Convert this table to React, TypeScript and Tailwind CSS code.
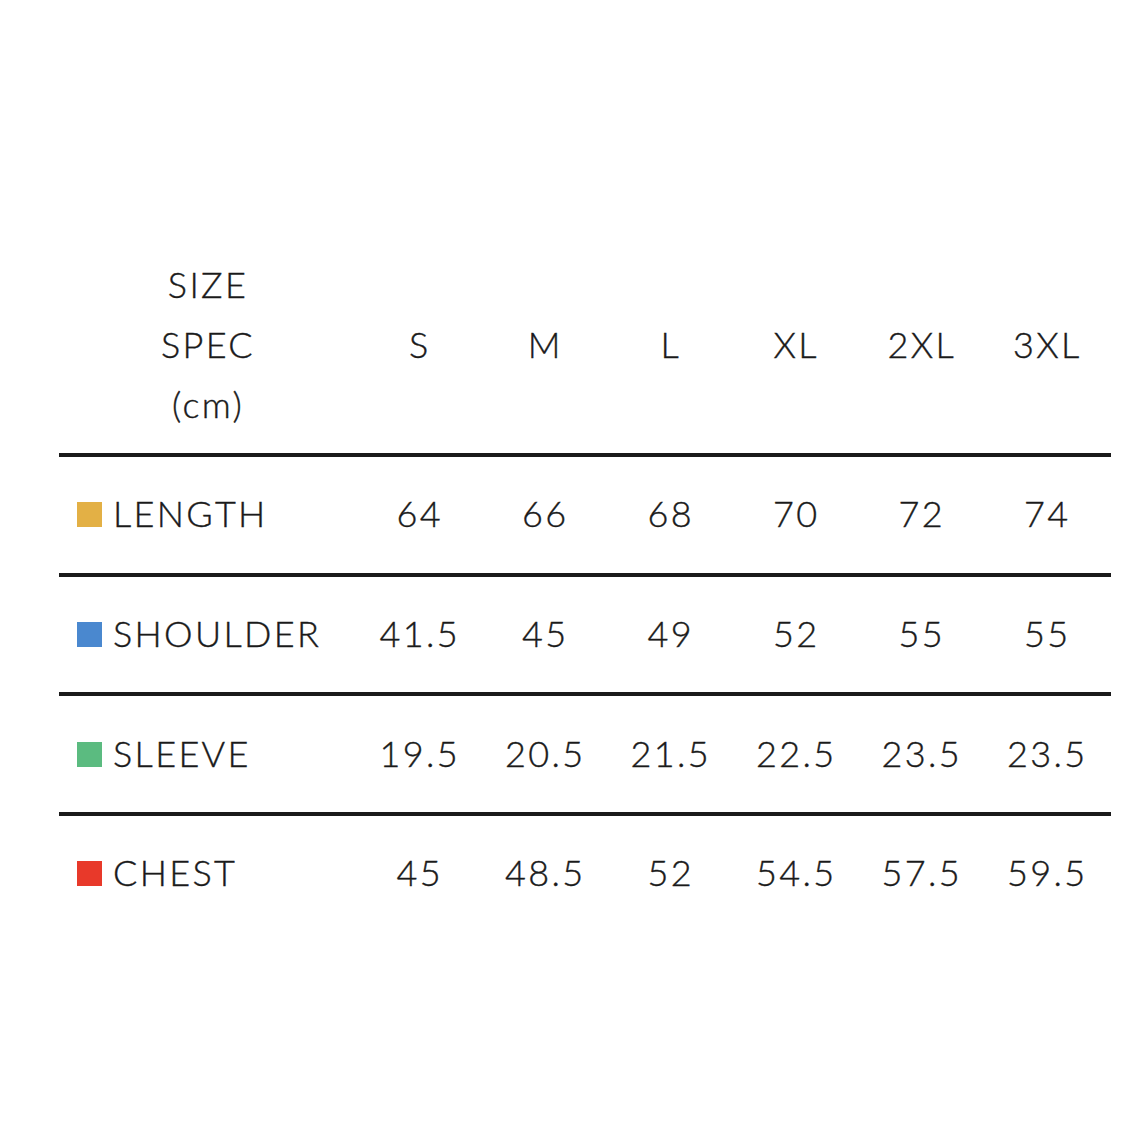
const sizes = ["S", "M", "L", "XL", "2XL", "3XL"];

const rows = [
  { label: "LENGTH", color: "bg-[#e3b045]", values: ["64", "66", "68", "70", "72", "74"] },
  { label: "SHOULDER", color: "bg-[#4a88cf]", values: ["41.5", "45", "49", "52", "55", "55"] },
  { label: "SLEEVE", color: "bg-[#5bbb80]", values: ["19.5", "20.5", "21.5", "22.5", "23.5", "23.5"] },
  { label: "CHEST", color: "bg-[#e8392a]", values: ["45", "48.5", "52", "54.5", "57.5", "59.5"] },
];

const grid = "grid grid-cols-[298px_repeat(6,125.5px)] items-center";

export default function App() {
  return (
    <div
      className="min-h-[1145px] w-[1144px] bg-white pt-[254px] text-[36px] font-light tracking-[0.065em] text-[#1a1a1a] [-webkit-text-stroke:0.4px_#1a1a1a]"
      style={{ fontFamily: "Lato, 'Noto Sans', sans-serif" }}
    >
      <div className="ml-[59px] w-[1052px]">
        {/* Header */}
        <div className={`${grid} pb-[19px] leading-[60px]`}>
          <div className="flex flex-col items-center">
            <span>SIZE</span>
            <span>SPEC</span>
            <span>(cm)</span>
          </div>
          {sizes.map((s) => (
            <div key={s} className="text-center">
              {s}
            </div>
          ))}
        </div>

        {/* Rows */}
        {rows.map((row) => (
          <div
            key={row.label}
            className={`${grid} h-[119.7px] border-t-4 border-[#1a1a1a] pb-[3px]`}
          >
            <div className="flex items-center gap-[11px] pl-[18px]">
              <span className={`mt-[3px] h-[25px] w-[25px] ${row.color}`} />
              <span>{row.label}</span>
            </div>
            {row.values.map((v, j) => (
              <div key={j} className="text-center">
                {v}
              </div>
            ))}
          </div>
        ))}
      </div>
    </div>
  );
}
